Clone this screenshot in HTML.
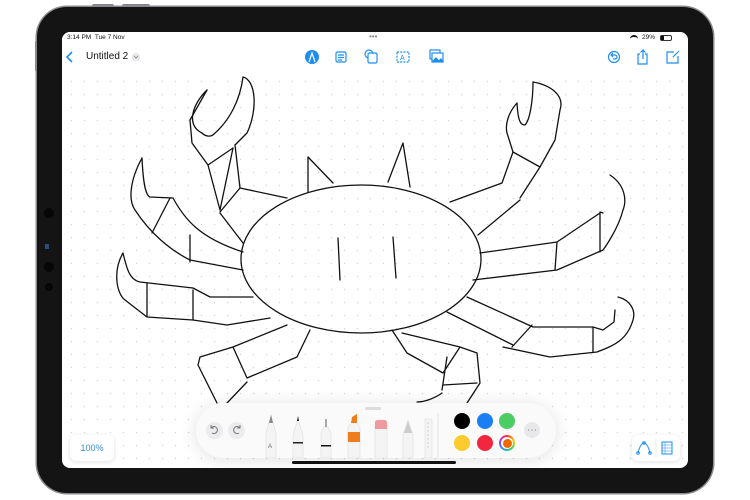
<!DOCTYPE html>
<html><head><meta charset="utf-8"><style>
*{margin:0;padding:0;box-sizing:border-box}
body{width:750px;height:500px;background:#fff;position:relative;overflow:hidden;font-family:"Liberation Sans",sans-serif}
.btn{position:absolute;background:#86868a;border-radius:2px}
.bezel{position:absolute;left:37px;top:7px;width:676px;height:486px;background:#141414;border-radius:30px;box-shadow:0 0 0 1.5px #8a8a8e}
.screen{position:absolute;left:62px;top:32px;width:626px;height:436px;background-color:#fff;border-radius:8px;overflow:hidden;
background-image:radial-gradient(circle,#d6d6da 0.6px,transparent 0.9px);background-size:13px 13px;background-position:3px 4px}
.top{position:absolute;left:0;top:0;width:626px;height:42px;background:#fff}
.st{position:absolute;top:2px;font-size:6.5px;color:#111}
.title{position:absolute;left:24px;top:19px;font-size:10px;color:#111}
.pill{position:absolute;left:134px;top:371px;width:360px;height:55px;background:#fafafa;border-radius:28px;box-shadow:0 2px 18px rgba(0,0,0,.12)}
.dot{position:absolute;width:16px;height:16px;border-radius:50%}
.zoom{position:absolute;left:8px;top:403px;width:44px;height:26px;background:#fff;border-radius:6px;box-shadow:0 1px 5px rgba(0,0,0,.12);font-size:9px;color:#3a8fd6;text-align:center;line-height:26px}
.br{position:absolute;left:570px;top:403px;width:48px;height:26px;background:#fff;border-radius:6px;box-shadow:0 1px 5px rgba(0,0,0,.12)}
.home{position:absolute;left:230px;top:429px;width:164px;height:3px;background:#111;border-radius:2px}
</style></head><body>
<div class="btn" style="left:92px;top:4px;width:22px;height:4px"></div>
<div class="btn" style="left:122px;top:4px;width:28px;height:4px"></div>
<div class="btn" style="left:35px;top:40px;width:4px;height:32px"></div>
<div class="bezel"></div>
<div style="position:absolute;left:44px;top:208px;width:10px;height:10px;border-radius:50%;background:#060606"></div>
<div style="position:absolute;left:45px;top:244px;width:4px;height:5px;background:#2a4c7a"></div>
<div style="position:absolute;left:44px;top:262px;width:10px;height:10px;border-radius:50%;background:#060606"></div>
<div style="position:absolute;left:45px;top:283px;width:8px;height:8px;border-radius:50%;background:#060606"></div>
<div class="screen">
<div class="top">
<div class="st" style="left:5px">3:14 PM&nbsp;&nbsp;Tue 7 Nov</div>
<div class="st" style="left:307px;top:0;font-size:8px;color:#888">•••</div>
<div class="st" style="left:580px">29%</div>
<div style="position:absolute;left:568px;top:3px;width:8px;height:5px;border-radius:5px 5px 0 0;border-top:2px solid #111"></div>
<div style="position:absolute;left:598px;top:3px;width:12px;height:6px;border:1px solid #333;border-radius:2px"><div style="width:3px;height:4px;background:#111"></div></div>
<svg style="position:absolute;left:0;top:0" width="626" height="42" fill="none" stroke="#1f8ef1" stroke-width="1.2">
<path d="M10 20 l-5 5 l5 5" stroke-width="1.6"/>
<circle cx="74" cy="25" r="4" fill="#e6e6ea" stroke="none"/>
<path d="M72 24 l2 2 l2 -2" stroke="#888" stroke-width=".8"/>
<circle cx="250" cy="25" r="7" fill="#1f8ef1" stroke="none"/>
<path d="M247 30 l3 -9 l3 9" stroke="#fff"/>
<rect x="274" y="20" width="10" height="10" rx="1.5"/><path d="M276 23h6M276 25.5h6M276 28h4"/>
<rect x="303" y="18" width="8" height="8" rx="4"/><rect x="306" y="21" width="9" height="10" rx="1.5" fill="#fff"/>
<rect x="335" y="20" width="12" height="10" stroke-dasharray="2 1.2"/><text x="338" y="28" font-size="7" fill="#1f8ef1" stroke="none" font-family="Liberation Sans">A</text>
<rect x="368" y="18" width="10" height="9"/><rect x="370" y="21" width="11" height="9" fill="#fff"/><path d="M370 30 l4 -4 l3 3 l2 -2 l2 3" fill="#1f8ef1"/>
<circle cx="552" cy="25" r="5.5"/><path d="M550 23 h3 a2 2 0 0 1 0 4 h-2 M551 21 l-2 2 l2 2"/>
<path d="M578 22 h-2 v10 h9 v-10 h-2 M581 27 v-9 M578.5 20.5 l2.5 -2.5 l2.5 2.5"/>
<path d="M612 20 h-7 v11 h11 v-7 M611 25 l6 -6"/>
</svg>
<div class="title">Untitled 2</div>
</div>
<svg style="position:absolute;left:-62px;top:-32px" width="750" height="500" fill="none" stroke="#111" stroke-width="1.3" stroke-linejoin="round" stroke-linecap="round">
<ellipse cx="361" cy="259" rx="120" ry="74"/>
<path d="M207 90 C192 105 186 125 202 133 C206 137 211 137 214 134 C230 120 240 100 243 77 C256 80 258 110 247 133 L235 145"/>
<path d="M207 90 L190 120 L192 143 L208 165 L233 148"/>
<path d="M208 165 L220 210 L233 148 M235 145 L240 188 L287 198 M220 212 L240 188 M220 213 L243 243"/>
<path d="M142 158 C130 180 128 200 135 210 C150 233 170 250 190 260 L243 270"/>
<path d="M142 158 C143 180 145 195 150 197 L173 198 C185 220 200 238 243 252 M170 198 L152 233 M190 235 L190 262"/>
<path d="M123 253 C113 270 116 293 125 300 L147 317 L193 320 L227 325 L270 318 M123 253 C127 270 130 280 140 282 L193 288 L210 297 L253 297 M147 283 L147 317 M193 290 L193 320"/>
<path d="M287 325 L233 347 L200 357 L198 365 L217 403 M310 330 L297 357 L247 378 M233 347 L247 378 M247 382 L227 403"/>
<path d="M308 157 L308 192 M308 157 L333 183 M403 143 L388 182 M403 143 L410 187"/>
<path d="M338 238 L340 280 M393 237 L396 278"/>
<path d="M517 103 C508 113 505 125 507 133 L513 152 M517 103 C518 120 520 125 525 125 C530 120 533 100 533 82 C550 85 565 95 560 110 L555 140 L540 167"/>
<path d="M513 152 L502 183 L450 202 M540 167 L520 198 M513 152 L540 167 M520 200 L478 235"/>
<path d="M610 175 C625 185 627 200 623 210 C618 230 603 250 603 250 L557 270 L473 280 M603 213 L600 212 L600 252 M480 253 L557 242 L600 213 M557 242 L555 270"/>
<path d="M618 297 C630 300 636 310 633 320 C627 340 615 345 597 352 L550 357 L503 347 M615 310 L614 322 L603 330 L593 327 L533 327 L467 297 M593 327 L593 352 M532 325 L512 347 M447 312 L513 345"/>
<path d="M402 333 L460 347 L443 373 M392 330 L407 353 L443 373 M460 347 L477 353 L480 383 L467 403 M443 385 L477 383 M447 357 L442 390 M417 402 C425 402 435 398 442 393"/>
</svg>
<div class="zoom">100%</div>
<div class="br"><svg width="48" height="26" fill="none" stroke="#1f8ef1" stroke-width="1"><path d="M6 18 C8 10 10 8 12 8 C14 8 16 10 18 18"/><circle cx="6" cy="18" r="1.3"/><circle cx="18" cy="18" r="1.3"/><circle cx="12" cy="8" r="1.3"/><path d="M24 3 v20" stroke="#eee"/><rect x="30" y="7" width="10" height="12"/><path d="M33 7v12 M30 10h10 M30 13h10 M30 16h10" stroke-width=".5"/></svg></div>
<div class="pill">
<div style="position:absolute;left:169px;top:4px;width:16px;height:3px;border-radius:2px;background:#ddd"></div>
<div style="position:absolute;left:10px;top:19px;width:17px;height:17px;border-radius:50%;background:#ececee"></div>
<div style="position:absolute;left:32px;top:19px;width:17px;height:17px;border-radius:50%;background:#ececee"></div>
<svg style="position:absolute;left:0;top:0" width="360" height="55" fill="none">
<path d="M15 25 a3.5 3.5 0 1 1 1 5 M15 22 v3 h3" stroke="#777" stroke-width="1"/>
<path d="M44 25 a3.5 3.5 0 1 0 -1 5 M44 22 v3 h-3" stroke="#777" stroke-width="1"/>
<path d="M70 55 V30 L75 12 L80 30 V55Z" fill="#f4f4f4" stroke="#ddd" stroke-width=".6"/><path d="M73 20 L75 12 L77 20Z" fill="#888"/><text x="72" y="45" font-size="6" fill="#666" font-family="Liberation Sans">A</text>
<path d="M97 55 V32 L102 16 L107 32 V55Z" fill="#f4f4f4" stroke="#ddd" stroke-width=".6"/><path d="M101 18 L102 13 L103 18Z" fill="#111"/><rect x="97" y="39" width="10" height="1.5" fill="#222"/>
<path d="M125 55 V30 L128 24 H132 L135 30 V55Z" fill="#f4f4f4" stroke="#ddd" stroke-width=".6"/><path d="M130 24 V16" stroke="#333" stroke-width=".8"/><rect x="125" y="42" width="10" height="1.5" fill="#111"/>
<path d="M152 55 V24 L155 20 H161 L164 24 V55Z" fill="#f4f4f4" stroke="#ddd" stroke-width=".6"/><path d="M155 20 L156 14 L161 11 V20Z" fill="#f07d1c"/><rect x="152" y="29" width="12" height="10" fill="#f07d1c"/>
<path d="M179 55 V20 Q179 17 182 17 H188 Q191 17 191 20 V55Z" fill="#f4f4f4" stroke="#ddd" stroke-width=".6"/><path d="M179 26 V20 Q179 17 182 17 H188 Q191 17 191 20 V26Z" fill="#ef9a9f"/>
<path d="M207 55 V32 L212 17 L217 32 V55Z" fill="#f4f4f4" stroke="#ddd" stroke-width=".6"/><path d="M208 30 L212 18 L216 30Z" fill="#ccc"/>
<rect x="229" y="16" width="7" height="39" fill="#f4f4f4" stroke="#ddd" stroke-width=".6"/><path d="M231 20h2M231 24h2M231 28h2M231 32h2M231 36h2M231 40h2M231 44h2" stroke="#aaa" stroke-width=".6"/>
<path d="M242 10 V55" stroke="#ddd" stroke-width=".8"/>
<circle cx="336" cy="27" r="8" fill="#e8e8ea"/><path d="M332 27h.8M335.6 27h.8M339.2 27h.8" stroke="#666" stroke-width="1"/>
</svg>
<div class="dot" style="left:258px;top:10px;background:#000"></div>
<div class="dot" style="left:281px;top:10px;background:#1a7ff2"></div>
<div class="dot" style="left:303px;top:10px;background:#4ccd63"></div>
<div class="dot" style="left:258px;top:32px;background:#fdcb2e"></div>
<div class="dot" style="left:281px;top:32px;background:#f2273f"></div>
<div class="dot" style="left:303px;top:32px;background:conic-gradient(#f33,#fc0,#3c6,#39f,#a3f,#f33)"><div style="margin:2px;width:12px;height:12px;border-radius:50%;background:#fff;padding:1.5px"><div style="width:9px;height:9px;border-radius:50%;background:#f06a00"></div></div></div>
</div>
<div class="home"></div>
</div>
</body></html>
